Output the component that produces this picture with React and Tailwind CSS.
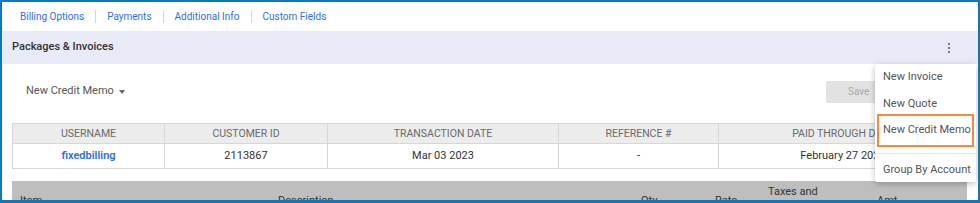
import { useState } from "react";

const tabs = ["Billing Options", "Payments", "Additional Info", "Custom Fields"];

const columns = [
  { label: "USERNAME", w: "w-[151px]" },
  { label: "CUSTOMER ID", w: "w-[163px]" },
  { label: "TRANSACTION DATE", w: "w-[231px]" },
  { label: "REFERENCE #", w: "w-[160px]" },
  { label: "PAID THROUGH DATE", w: "flex-1" },
];

const App = () => {
  const [active] = useState("New Credit Memo");

  return (
    <div className="w-[980px] h-[203px] overflow-hidden bg-[#0f78b8] pt-[2px] pl-[2px] pr-[2px] pb-[3px] font-['Roboto',sans-serif]">
      <div className="relative h-full bg-white overflow-hidden">
        {/* tabs */}
        <div className="flex items-center h-[29px] pl-[18px] text-[10px] text-[#2f6fdc]">
          {tabs.map((t, i) => (
            <div key={t} className="flex items-center">
              {i > 0 && <span className="w-px h-[13px] bg-[#d6d6d6] mx-[11px]" />}
              <span>{t}</span>
            </div>
          ))}
        </div>

        {/* section header */}
        <div className="flex items-center justify-between h-[33px] bg-[#e8eaf8] pl-[10px] pr-[28px]">
          <span className="text-[11px] font-medium text-[#333]">Packages &amp; Invoices</span>
          <div className="flex flex-col gap-[2px]">
            <span className="w-[2px] h-[2px] rounded-full bg-[#555]" />
            <span className="w-[2px] h-[2px] rounded-full bg-[#555]" />
            <span className="w-[2px] h-[2px] rounded-full bg-[#555]" />
          </div>
        </div>

        {/* toolbar */}
        <div className="flex items-center justify-between h-[59px] pl-[24px] pr-[86px] pb-[4px]">
          <div className="flex items-center gap-[5px] text-[11px] text-[#555]">
            <span>New Credit Memo</span>
            <span className="w-0 h-0 border-l-[3px] border-r-[3px] border-t-[4px] border-l-transparent border-r-transparent border-t-[#666]" />
          </div>
          <div className="w-[66px] h-[22px] bg-[#e2e2e2] rounded-[2px] flex items-center pl-[22px] text-[10px] text-[#aaa]">
            Save
          </div>
        </div>

        {/* summary table */}
        <div className="mx-[10px] border border-[#d7d7d7] text-[10.5px]">
          <div className="flex h-[20px] bg-[#ececec] text-[#6a6a6a] border-b border-[#d7d7d7]">
            {columns.map((c, i) => (
              <div
                key={c.label}
                className={`${c.w} flex items-center justify-center ${i > 0 ? "border-l border-[#d7d7d7]" : ""}`}
              >
                {c.label}
              </div>
            ))}
          </div>
          <div className="flex h-[24px] text-[#333] text-[11px]">
            <div className="w-[151px] flex items-center justify-center font-semibold text-[#2f6fdc]">fixedbilling</div>
            <div className="w-[163px] flex items-center justify-center border-l border-[#d7d7d7]">2113867</div>
            <div className="w-[231px] flex items-center justify-center border-l border-[#d7d7d7]">Mar 03 2023</div>
            <div className="w-[160px] flex items-center justify-center border-l border-[#d7d7d7]">-</div>
            <div className="flex-1 flex items-center justify-center border-l border-[#d7d7d7]">February 27 2023</div>
          </div>
        </div>

        {/* items table header */}
        <div className="ml-[10px] mr-[11px] mt-[12px] h-[24px] bg-[#bebebe] relative text-[11px] text-[#333]">
          <span className="absolute left-[8px] top-[12px]">Item</span>
          <span className="absolute left-[266px] top-[12px]">Description</span>
          <span className="absolute left-[629px] top-[12px]">Qty</span>
          <span className="absolute left-[703px] top-[12px]">Rate</span>
          <span className="absolute left-[756px] top-[3px]">Taxes and</span>
          <span className="absolute left-[865px] top-[12px]">Amt</span>
        </div>

        {/* dropdown menu */}
        <div className="absolute left-[873px] top-[62px] w-[101px] bg-white rounded-[2px] shadow-[0_2px_6px_rgba(0,0,0,0.25)] text-[11px] text-[#555] whitespace-nowrap">
          <div className="h-[27px] flex items-center pl-[8px]">New Invoice</div>
          <div className="h-[23px] flex items-center pl-[8px] pt-[3px]">New Quote</div>
          <div
            className={`h-[33px] flex items-center mx-[2px] pl-[4px] ${
              active === "New Credit Memo" ? "border-2 border-[#f58a3c]" : ""
            }`}
          >
            New Credit Memo
          </div>
          <div className="h-px bg-[#e4e4e4] mt-[6px]" />
          <div className="h-[28px] flex items-center pl-[8px] pt-[4px]">Group By Account</div>
        </div>
      </div>
    </div>
  );
};

export default App;
